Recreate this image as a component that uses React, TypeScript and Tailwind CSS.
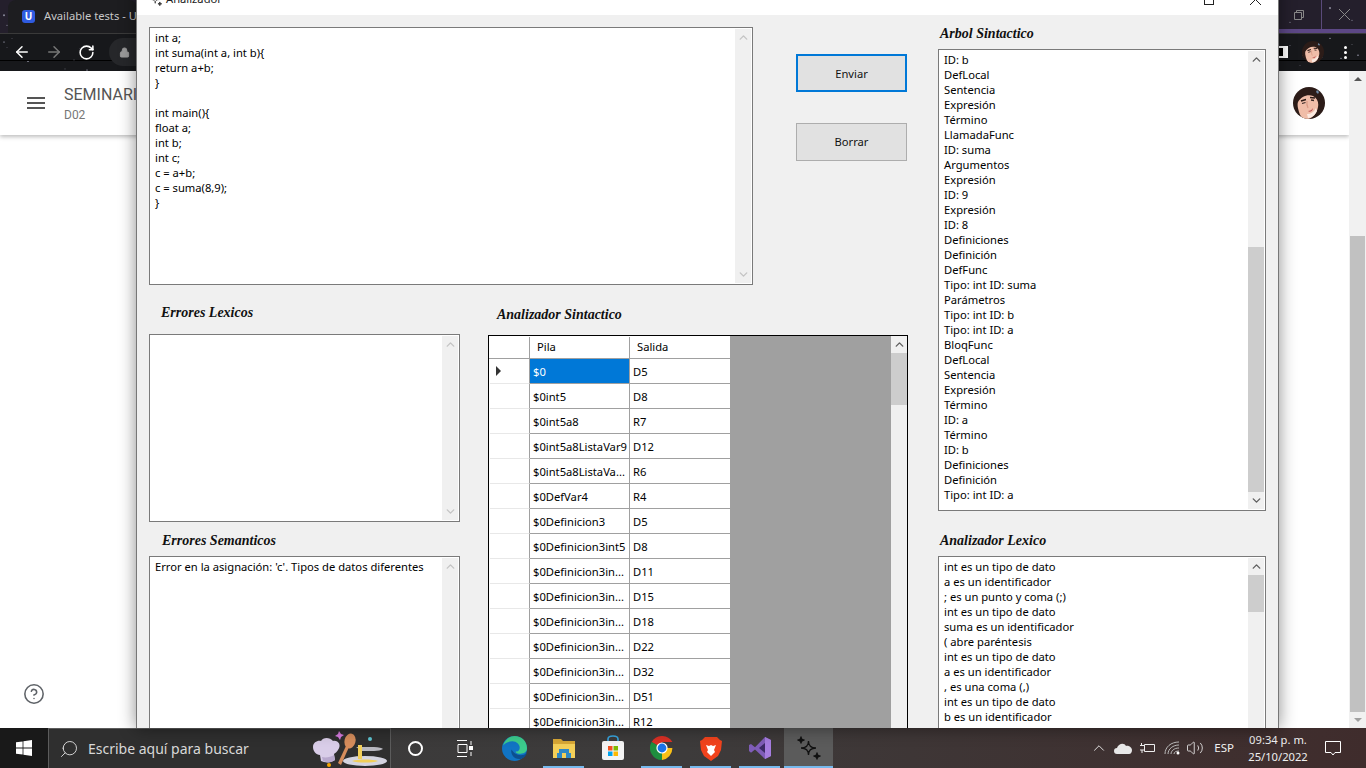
import { ArrowLeft, ArrowRight, ChevronDown, ChevronUp, CircleHelp, Lock, RotateCw, Search, Volume2 } from "lucide-react";

const uiFont = "font-['Noto_Sans','Liberation_Sans',sans-serif]";
const titleFont = "shrink-0 font-['Liberation_Serif',serif] font-bold italic text-[14px] leading-[16px] text-[#111]";

const codeLines = ["int a;", "int suma(int a, int b){", "return a+b;", "}", "\u00a0", "int main(){", "float a;", "int b;", "int c;", "c = a+b;", "c = suma(8,9);", "}"];

const treeLines = ["ID: b", "DefLocal", "Sentencia", "Expresión", "Término", "LlamadaFunc", "ID: suma", "Argumentos", "Expresión", "ID: 9", "Expresión", "ID: 8", "Definiciones", "Definición", "DefFunc", "Tipo: int ID: suma", "Parámetros", "Tipo: int ID: b", "Tipo: int ID: a", "BloqFunc", "DefLocal", "Sentencia", "Expresión", "Término", "ID: a", "Término", "ID: b", "Definiciones", "Definición", "Tipo: int ID: a"];

const lexLines = ["int es un tipo de dato", "a es un identificador", "; es un punto y coma (;)", "int es un tipo de dato", "suma es un identificador", "( abre paréntesis", "int es un tipo de dato", "a es un identificador", ", es una coma (,)", "int es un tipo de dato", "b es un identificador"];

const rows = [
  ["$0", "D5"],
  ["$0int5", "D8"],
  ["$0int5a8", "R7"],
  ["$0int5a8ListaVar9", "D12"],
  ["$0int5a8ListaVa...", "R6"],
  ["$0DefVar4", "R4"],
  ["$0Definicion3", "D5"],
  ["$0Definicion3int5", "D8"],
  ["$0Definicion3in...", "D11"],
  ["$0Definicion3in...", "D15"],
  ["$0Definicion3in...", "D18"],
  ["$0Definicion3in...", "D22"],
  ["$0Definicion3in...", "D32"],
  ["$0Definicion3in...", "D51"],
  ["$0Definicion3in...", "R12"],
];

function ScrollBar({ thumbTop, thumbHeight, disabled = false }: { thumbTop?: number; thumbHeight?: number; disabled?: boolean }) {
  const arrow = disabled ? "text-[#c4c4c4]" : "text-[#606060]";
  return (
    <div className="relative flex w-[16px] shrink-0 flex-col justify-between bg-[#f0f0f0]">
      <div className="flex h-[17px] items-center justify-center">
        <ChevronUp size={13} strokeWidth={2.6} className={arrow} />
      </div>
      {thumbHeight != null && (
        <div className="absolute left-0 w-[16px] bg-[#cdcdcd]" style={{ top: thumbTop, height: thumbHeight }} />
      )}
      <div className="flex h-[17px] items-center justify-center">
        <ChevronDown size={13} strokeWidth={2.6} className={arrow} />
      </div>
    </div>
  );
}

function TextBox({ lines, className = "", thumbTop, thumbHeight, disabled }: { lines: string[]; className?: string; thumbTop?: number; thumbHeight?: number; disabled?: boolean }) {
  return (
    <div className={`flex shrink-0 overflow-hidden border border-[#7a7a7a] bg-white p-[1px] ${className}`}>
      <div className="min-w-0 flex-1 overflow-hidden pl-[4px] pt-[1px] text-[11.2px] leading-[15px] text-black">
        {lines.map((l, i) => (
          <div key={i} className="whitespace-nowrap">{l}</div>
        ))}
      </div>
      <ScrollBar thumbTop={thumbTop} thumbHeight={thumbHeight} disabled={disabled} />
    </div>
  );
}

function StarsIcon({ size, color = "#111" }: { size: number; color?: string }) {
  return (
    <svg width={size} height={size} viewBox="0 0 24 24" fill="none" stroke={color} strokeWidth="1.3" className="shrink-0">
      <path d="M11.500 5Q11.500 12 19 12Q11.500 12 11.500 19Q11.500 12 4 12Q11.500 12 11.500 5z" />
      <path d="M4 0.500Q4 4 7.500 4Q4 4 4 7.500Q4 4 0.500 4Q4 4 4 0.500z" fill={color} />
      <path d="M20 16.500Q20 20 23.500 20Q20 20 20 23.500Q20 20 16.500 20Q20 20 20 16.500z" fill={color} />
    </svg>
  );
}

function Avatar({ size, id }: { size: number; id: string }) {
  return (
    <svg width={size} height={size} viewBox="0 0 32 32" className="shrink-0">
      <defs>
        <clipPath id={id}>
          <circle cx="16" cy="16" r="16" />
        </clipPath>
      </defs>
      <g clipPath={`url(#${id})`}>
        <rect width="32" height="32" fill="#2c1c18" />
        <path d="M0 20c2 6 5 10 10 12H0z" fill="#c2653c" />
        <path d="M5 15c3-5 9-8 15-6 4 2 6 6 5 11-1 6-5 11-10 12-5 1-8-3-9-7-1-4-2-7-1-10z" fill="#f0bda8" />
        <path d="M14 27c4 0 7-2 9-6l1 3c-2 4-5 7-9 7z" fill="#fbe9e0" />
        <path d="M15 24c2 0 4-1 5-3 0 3-3 5-5 3z" fill="#bb4f52" />
        <path d="M8 14l5-1.500M17 10.500l5 .5" stroke="#2c1c18" strokeWidth="1.600" />
        <path d="M9 16.500l3.500-1M18 13l3 .5" stroke="#3b2a26" strokeWidth="1.300" />
        <path d="M14 14c-.5 3 0 5 1 7" stroke="#d99a85" strokeWidth="1.200" fill="none" />
        <path d="M24 3l2 2-1 2-2-2z" fill="#6d8aa8" />
      </g>
    </svg>
  );
}

function Stars() {
  const dots = [[4, 15], [12, 8], [7, 25], [28, 52], [74, 49], [65, 66], [87, 68], [112, 30], [80, 27], [190, 12], [240, 40], [1290, 22], [1330, 8], [1352, 20], [1322, 44], [1358, 40], [1300, 60], [1284, 40], [1341, 46]];
  return (
    <svg className="absolute inset-0 h-full w-full" viewBox="0 0 1366 70" preserveAspectRatio="none">
      {dots.map(([x, y], i) => (
        <circle key={i} cx={x} cy={y} r={i % 3 === 0 ? 1 : 0.6} fill="#8a8a9a" />
      ))}
    </svg>
  );
}

function ChefArt() {
  return (
    <svg width="78" height="38" viewBox="0 0 78 38">
      <path d="M3 17c0-5 5-7 8-6 2-4 9-4 12 0 5-1 9 4 5 9-1 2-3 3-4 4l1 6c-4 3-10 3-14 1l-1-6c-4 0-7-4-7-8z" fill="#d9cde8" />
      <path d="M13 31c4 2 8 2 12-1l-1-5c-3 2-8 3-12 2z" fill="#b9a9ce" />
      <path d="M28 33l8-17 3 1-8 18z" fill="#d68d5c" />
      <ellipse cx="40" cy="11" rx="5.500" ry="7.500" transform="rotate(15 40 11)" fill="#d68d5c" />
      <path d="M46 17h18c5 0 8 1 9 2-2 1-5 2-9 2H52z" fill="#b8b8c0" />
      <ellipse cx="55" cy="31" rx="22" ry="5" fill="#d4d4e0" />
      <path d="M42 31c6-2 20-2 26 0-6 2-20 2-26 0z" fill="#f2cf59" />
      <path d="M48 15h4v14h-4z" fill="#f2cf59" />
      <path d="M29 1l2 3 3 1-3 2-1 3-2-3-3-1 3-2z" fill="#d77ce0" />
      <circle cx="60" cy="9" r="2" fill="#5fc7d4" />
      <circle cx="19" cy="35" r="2" fill="#f5a500" />
    </svg>
  );
}

function EdgeIcon() {
  return (
    <svg width="25" height="25" viewBox="0 0 24 24">
      <circle cx="12" cy="12" r="12" fill="#1174c4" />
      <path d="M1 9C3 3 8 0 12 0c7 0 12 5 12 12 0 3-3 5-6 5-3 0-5-1-5-2 2 0 4-1 4-4 0-3-3-6-7-6-4 0-7 2-9 4z" fill="#3ccb8c" />
      <path d="M9 13c-1 5 3 10 9 9 3-1 5-3 6-6-3 3-8 3-11 1-2-1-3-3-4-4z" fill="#0c4f8f" />
    </svg>
  );
}

function ExplorerIcon() {
  return (
    <svg width="24" height="22" viewBox="0 0 24 22">
      <path d="M1 2h8l2 2h12v16H1z" fill="#d8a735" />
      <path d="M1 7h22v14H1z" fill="#f4cf58" />
      <path d="M7 12h10v4h2v5H5v-5h2z" fill="#2f88c6" />
      <path d="M10 16h4v5h-4z" fill="#f4cf58" />
    </svg>
  );
}

function StoreIcon() {
  return (
    <svg width="24" height="26" viewBox="0 0 24 26">
      <path d="M7 7V4c0-2 2-3 5-3s5 1 5 3v3" fill="none" stroke="#38a6e0" strokeWidth="1.600" />
      <rect x="1" y="6" width="22" height="19" rx="2" fill="#f4f4f4" />
      <rect x="7" y="11" width="4.500" height="4.500" fill="#f25022" />
      <rect x="12.500" y="11" width="4.500" height="4.500" fill="#7fba00" />
      <rect x="7" y="16.500" width="4.500" height="4.500" fill="#00a4ef" />
      <rect x="12.500" y="16.500" width="4.500" height="4.500" fill="#ffb900" />
    </svg>
  );
}

function ChromeIcon() {
  return (
    <svg width="24" height="24" viewBox="0 0 24 24">
      <path d="M12 12 1.600 6A12 12 0 0 1 22.400 6H12z" fill="#d93025" />
      <path d="M12 12H22.400A12 12 0 0 1 12 24z" fill="#fbc116" />
      <path d="M12 12v12A12 12 0 0 1 1.600 6z" fill="#1e8e3e" />
      <circle cx="12" cy="12" r="5.600" fill="#fff" />
      <circle cx="12" cy="12" r="4.400" fill="#1a73e8" />
    </svg>
  );
}

function BraveIcon() {
  return (
    <svg width="22" height="25" viewBox="0 0 22 25">
      <path d="M5 1h12l3 3 2 1-1 9-3 6-7 5-7-5-3-6-1-9 2-1z" fill="#f1431d" />
      <path d="M6 9l3 1 2-1 2 1 3-1-2 5 1 2-4 4-4-4 1-2z" fill="#fff" />
    </svg>
  );
}

function VsIcon() {
  return (
    <svg width="24" height="24" viewBox="0 0 24 24">
      <path d="M17 1l6 3v16l-6 3-10-9.500-4 3.300L1 15V9l2-1 4 3.300z" fill="#7f5db8" />
      <path d="M17 7l-6 5 6 5z" fill="#3c2a66" />
      <path d="M17 1l6 3v16l-6 3z" fill="#a67de0" />
    </svg>
  );
}

function TaskIcon({ children, active = false, running = false }: { children: React.ReactNode; active?: boolean; running?: boolean }) {
  return (
    <div className={`relative flex h-full w-[49px] items-center justify-center ${active ? "bg-[#5b5b5b]" : ""}`}>
      {children}
      {running && (
        <div className={`absolute bottom-0 h-[2px] bg-[#76b9ed] ${active ? "inset-x-0" : "inset-x-[4px]"}`} />
      )}
    </div>
  );
}

function Taskbar() {
  return (
    <div className="flex h-[40px] shrink-0 items-stretch bg-gradient-to-r from-[#3a3a3a] via-[#3d3b3b] to-[#3f2c2c] text-white">
      <div className="flex w-[48px] items-center justify-center bg-[#191919]">
        <svg width="16" height="16" viewBox="0 0 16 16" fill="#fff">
          <path d="M0 2.300 6.600 1.400V7.600H0zM7.400 1.300 16 0V7.600H7.400zM0 8.400H6.600V14.600L0 13.700zM7.400 8.400H16V16L7.400 14.700z" />
        </svg>
      </div>
      <div className="flex w-[343px] items-center justify-between border border-b-0 border-[#5c5c5c] bg-[#2f2f2f] pl-[10px] pr-[2px]">
        <div className="flex items-center gap-[9px]">
          <Search size={20} strokeWidth={1.1} className="-scale-x-100 text-[#e0e0e0]" />
          <span className="text-[14px] text-[#d8d8d8]">Escribe aquí para buscar</span>
        </div>
        <ChefArt />
      </div>
      <TaskIcon>
        <div className="h-[15px] w-[15px] rounded-full border-2 border-white" />
      </TaskIcon>
      <TaskIcon>
        <svg width="16" height="17" viewBox="0 0 16 17" fill="none" stroke="#fff" strokeWidth="1">
          <path d="M0 .5h10M0 16.500h10M1 4.500h9v8H1z" />
          <path d="M14 1v4M14 12v4" />
          <rect x="12.500" y="6.500" width="3" height="3" fill="#fff" />
        </svg>
      </TaskIcon>
      <div className="flex h-full items-stretch pl-[1px]">
        <TaskIcon><EdgeIcon /></TaskIcon>
        <TaskIcon running><ExplorerIcon /></TaskIcon>
        <TaskIcon><StoreIcon /></TaskIcon>
        <TaskIcon running><ChromeIcon /></TaskIcon>
        <TaskIcon running><BraveIcon /></TaskIcon>
        <TaskIcon running><VsIcon /></TaskIcon>
        <TaskIcon active running>
          <StarsIcon size={24} />
        </TaskIcon>
      </div>
      <div className="ml-auto flex items-center pr-[8px] text-[#f0f0f0]">
        <ChevronUp size={18} strokeWidth={1.2} />
        <svg width="18" height="12" viewBox="0 0 18 12" className="ml-[6px]">
          <path d="M3 12a3 3 0 0 1 0-6c1-4 7-6 9-2 3-1 6 2 6 4s-1 4-3 4z" fill="#e8e8e8" />
        </svg>
        <svg width="17" height="12" viewBox="0 0 17 12" fill="none" stroke="#eee" className="ml-[7px]">
          <path d="M5.500 2.500h10v7h-10zM15.500 5v2.500M1 3.500h4M1 8h4M2.500 1v2.500M3 8v3" />
        </svg>
        <svg width="16" height="14" viewBox="0 0 16 14" fill="none" stroke="#bbb" className="ml-[8px]">
          <path d="M1 13C1 6 7 1 15 1M4 13c0-5 5-9 11-9M7 13c0-3 3-6 8-6M10 13c0-2 2-3 5-3" />
          <circle cx="14" cy="12" r="1.500" fill="#fff" stroke="none" />
        </svg>
        <Volume2 size={18} strokeWidth={1.1} className="ml-[6px]" />
        <span className="ml-[10px] text-[11.5px]">ESP</span>
        <div className="ml-[14px] flex w-[60px] flex-col items-center text-[11.2px] leading-[17px]">
          <span>09:34 p. m.</span>
          <span>25/10/2022</span>
        </div>
        <div className="flex w-[50px] justify-center">
          <svg width="16" height="16" viewBox="0 0 16 16" fill="none" stroke="#fff">
            <path d="M.5 1.500h15v11H10L8 15l-2-2.500H.5z" />
          </svg>
        </div>
      </div>
    </div>
  );
}

function Window() {
  return (
    <div className="absolute left-[136px] top-[-16px] flex h-[744px] w-[1143px] flex-col overflow-hidden border-x border-[#777] bg-[#f0f0f0] shadow-[0_0_16px_rgba(0,0,0,0.45)]">
      <div className="flex h-[31px] shrink-0 items-center bg-white pl-[12px] text-[11.2px] text-[#222]">
        <StarsIcon size={13} color="#222" />
        <span className="ml-[4px]">Analizador</span>
        <div className="ml-auto flex items-center">
          <div className="h-[10px] w-[10px] border border-[#222]" />
          <svg width="11" height="11" viewBox="0 0 11 11" stroke="#222" className="ml-[36px] mr-[17px]">
            <path d="M0 0l11 11M11 0L0 11" />
          </svg>
        </div>
      </div>
      <div className="flex min-h-0 flex-1 pl-[12px]">
        <div className="flex w-[759px] shrink-0 flex-col">
          <div className="mt-[12px] flex shrink-0">
            <TextBox lines={codeLines} disabled className="h-[258px] w-[604px]" />
            <div className="ml-[43px] flex w-[111px] flex-col gap-[31px] pt-[27px] text-[11.2px] text-[#111]">
              <button className="h-[38px] border-2 border-[#0078d7] bg-[#e1e1e1] pt-[2px]">Enviar</button>
              <button className="h-[38px] border border-[#adadad] bg-[#e1e1e1]">Borrar</button>
            </div>
          </div>
          <div className="flex min-h-0 flex-1">
            <div className="flex w-[311px] shrink-0 flex-col">
              <div className={`h-[49px] pl-[12px] pt-[20px] ${titleFont}`}>Errores Lexicos</div>
              <TextBox lines={[]} disabled className="h-[188px]" />
              <div className={`h-[34px] pl-[13px] pt-[11px] ${titleFont}`}>Errores Semanticos</div>
              <TextBox lines={["Error en la asignación: 'c'. Tipos de datos diferentes"]} disabled className="h-[200px]" />
            </div>
            <div className="ml-[28px] flex w-[420px] shrink-0 flex-col">
              <div className={`h-[50px] pl-[9px] pt-[22px] ${titleFont}`}>Analizador Sintactico</div>
              <div className="flex h-[420px] shrink-0 border border-black bg-[#a0a0a0]">
                <div className="flex-1 text-[11.2px] text-black">
                  <div className="flex h-[23px] w-[241px] border-b border-[#a0a0a0] bg-white pl-[1px] pt-[1px]">
                    <div className="w-[40px] border-r border-[#a0a0a0]" />
                    <div className="flex w-[100px] items-center border-r border-[#a0a0a0] pl-[7px]">Pila</div>
                    <div className="flex w-[100px] items-center pl-[7px]">Salida</div>
                  </div>
                  {rows.map(([pila, salida], i) => (
                    <div key={i} className="flex h-[25px] w-[241px] bg-white pl-[1px]">
                      <div className="flex w-[40px] items-center border-b border-r border-[#e8e8e8] border-r-[#a0a0a0] pl-[6px]">
                        {i === 0 && <div className="h-0 w-0 border-y-[5px] border-l-[5px] border-y-transparent border-l-[#333]" />}
                      </div>
                      <div className={`flex w-[100px] items-center overflow-hidden whitespace-nowrap border-b border-r border-[#a0a0a0] pl-[3px] pt-[2px] ${i === 0 ? "bg-[#0078d7] text-white" : ""}`}>{pila}</div>
                      <div className="flex w-[100px] items-center border-b border-[#a0a0a0] pl-[3px] pt-[2px]">{salida}</div>
                    </div>
                  ))}
                </div>
                <ScrollBar thumbTop={17} thumbHeight={52} />
              </div>
            </div>
          </div>
        </div>
        <div className="ml-[30px] flex w-[328px] shrink-0 flex-col">
          <div className={`h-[34px] pl-[2px] pt-[11px] ${titleFont}`}>Arbol Sintactico</div>
          <TextBox lines={treeLines} thumbTop={196} thumbHeight={245} className="h-[462px]" />
          <div className={`h-[45px] pl-[2px] pt-[22px] ${titleFont}`}>Analizador Lexico</div>
          <TextBox lines={lexLines} thumbTop={17} thumbHeight={37} className="h-[200px]" />
        </div>
      </div>
    </div>
  );
}

export default function App() {
  return (
    <div className={`relative flex h-[768px] w-[1366px] flex-col overflow-hidden bg-white ${uiFont}`}>
      <div className="relative h-[71px] shrink-0 bg-[#241f2c]">
        <Stars />
        <div className="relative flex h-[33px] items-end pl-[8px]">
          <div className="flex h-[33px] w-[129px] items-center overflow-hidden rounded-t-lg bg-[#1d1d20] pl-[14px] text-[11.2px] text-[#c8c8c8]">
            <div className="flex h-[13px] w-[13px] shrink-0 items-center justify-center rounded-[3px] bg-[#2f5be0] text-[10px] font-bold text-white">U</div>
            <span className="ml-[9px] whitespace-nowrap">Available tests - U</span>
          </div>
          <div className="ml-auto flex h-[29px] self-start">
            <div className="flex w-[44px] items-center justify-center">
              <svg width="10" height="10" viewBox="0 0 10 10" fill="none" stroke="#888"><path d="M.5 2.500h7v7h-7zM2.500 2.500V.5h7v7H7.500" /></svg>
            </div>
            <div className="flex w-[45px] items-center justify-center border-l border-[#5a4a7a]">
              <svg width="11" height="11" viewBox="0 0 11 11" stroke="#888"><path d="M0 0l11 11M11 0L0 11" /></svg>
            </div>
          </div>
        </div>
        <div className="absolute right-0 top-[29px] h-[4px] w-[88px] bg-[#5c4785]" />
        <div className="absolute bottom-0 h-[38px] w-full border-t border-[#3a3a3a] bg-[#17181b]">
          <div className="absolute inset-x-0 top-[26px] h-px bg-black" />
          <Stars />
          <div className="relative flex h-full items-center pb-[1px] pl-[13px] text-white">
            <ArrowLeft size={18} strokeWidth={2} />
            <ArrowRight size={18} strokeWidth={2} className="ml-[14px] text-[#777]" />
            <RotateCw size={17} strokeWidth={2.2} className="ml-[15px]" />
            <div className="ml-[14px] flex h-[28px] w-[40px] items-center rounded-l-full bg-[#26272a] pl-[10px]">
              <Lock size={11} fill="#9a9a9a" className="text-[#9a9a9a]" />
            </div>
            <div className="ml-auto flex items-center pr-[19px]">
              <div className="mr-[14px] flex h-[12px] w-[9px] items-center justify-start bg-white">
                <div className="h-[8px] w-[4px] bg-black" />
              </div>
              <Avatar size={22} id="avatar-small" />
              <div className="ml-[20px] flex flex-col gap-[2px]">
                <div className="h-[3px] w-[3px] rounded-full bg-white" />
                <div className="h-[3px] w-[3px] rounded-full bg-white" />
                <div className="h-[3px] w-[3px] rounded-full bg-white" />
              </div>
            </div>
          </div>
        </div>
      </div>
      <div className="flex min-h-0 flex-1">
        <div className="flex min-w-0 flex-1 flex-col">
          <div className="flex h-[64px] shrink-0 items-center justify-between pl-[27px] pr-[24px] shadow-[0_2px_4px_rgba(0,0,0,0.25)]">
            <div className="flex items-center">
              <svg width="18" height="12" viewBox="0 0 18 12" fill="#555">
                <path d="M0 0h18v2H0zM0 5h18v2H0zM0 10h18v2H0z" />
              </svg>
              <div className="ml-[19px] pt-[3px] font-['Roboto',sans-serif]">
                <div className="text-[16px] leading-[20px] text-[#555]">SEMINARIO</div>
                <div className="text-[12px] leading-[20px] text-[#777]">D02</div>
              </div>
            </div>
            <Avatar size={32} id="avatar-large" />
          </div>
          <div className="mt-auto pb-[23px] pl-[23px]">
            <CircleHelp size={22} strokeWidth={1.7} className="text-[#5f6368]" />
          </div>
        </div>
        <div className="flex w-[17px] shrink-0 flex-col items-center bg-[#f1f1f1] pt-[6px]">
          <div className="h-0 w-0 border-x-[4px] border-b-[4px] border-x-transparent border-b-[#555]" />
          <div className="mt-[155px] h-[476px] w-[15px] bg-[#c1c1c1]" />
          <div className="mt-[6px] h-0 w-0 border-x-[4px] border-t-[4px] border-x-transparent border-t-[#a0a0a0]" />
        </div>
      </div>
      <Taskbar />
      <Window />
    </div>
  );
}
